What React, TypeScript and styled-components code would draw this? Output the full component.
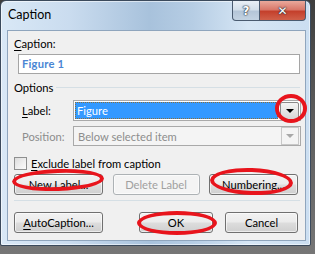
import React from 'react';
import styled, { createGlobalStyle, css } from 'styled-components';

const GlobalStyle = createGlobalStyle`
  html, body {
    margin: 0;
    padding: 0;
    width: 315px;
    height: 254px;
    overflow: hidden;
    background: linear-gradient(180deg, #3e3e3e 0%, #5c5c5c 45%, #767676 100%);
  }
  body {
    font-family: Lato, "Noto Sans", sans-serif;
    font-size: 11.2px;
  }
`;

const Window = styled.div`
  width: 309px;
  height: 244px;
  display: flex;
  flex-direction: column;
  border: 1px solid #3b4a5c;
  border-radius: 6px 6px 2px 2px;
  background: linear-gradient(
    90deg,
    #d9e8f6 0%,
    #cadcef 22%,
    #a8c2dc 48%,
    #b6cde4 62%,
    #d6e6f5 80%,
    #cbdef1 100%
  );
  box-shadow: inset 0 0 0 1px rgba(255, 255, 255, 0.55);
`;

const TitleBar = styled.div`
  height: 29px;
  display: flex;
  align-items: flex-start;
  padding-right: 4px;
`;

const Title = styled.div`
  flex: 1;
  padding: 6px 0 0 7px;
  font-size: 12.5px;
  line-height: 16px;
  color: #000;
`;

const CaptionButton = styled.div<{ $close?: boolean }>`
  height: 19px;
  display: flex;
  align-items: center;
  justify-content: center;
  border: 1px solid #4a5b70;
  border-top: none;
  font-family: "DejaVu Sans", sans-serif;
  font-weight: bold;
  color: #fff;
  text-shadow: 0 0 1px #2a3340, 0 0 1px #2a3340, 0 0 2px #2a3340;
  ${({ $close }) =>
    $close
      ? css`
          width: 45px;
          border-left: none;
          border-radius: 0 0 4px 0;
          font-size: 12px;
          background: linear-gradient(180deg, #e9a99c 0%, #d9786a 45%, #c4402c 55%, #d0604a 100%);
        `
      : css`
          width: 26px;
          border-radius: 0 0 0 4px;
          font-size: 12px;
          background: linear-gradient(180deg, #e8eff6 0%, #d3dfea 45%, #b5c6d8 55%, #c3d3e2 100%);
        `}
`;

const Client = styled.div`
  flex: 1;
  margin: 0 4px 4px 6px;
  border: 1px solid #8fa5bd;
  background: #f0f0f0;
  padding: 5px 5px 0 6px;
  display: flex;
  flex-direction: column;
  color: #000;
`;

const FieldLabel = styled.div`
  line-height: 16px;
  height: 16px;
`;

const Key = styled.span`
  text-decoration: underline;
  text-underline-offset: 2px;
`;

const TextInput = styled.div`
  margin: 2px 0 0 4px;
  height: 18px;
  border: 1px solid #a5a5a5;
  background: #fff;
  padding-left: 3px;
  line-height: 18px;
  color: #4a86d4;
  font-weight: bold;
  letter-spacing: 0.2px;
`;

const GroupHeader = styled.div`
  margin-top: 5px;
  height: 16px;
  display: flex;
  align-items: center;
  gap: 3px;
  &::after {
    content: '';
    flex: 1;
    height: 1px;
    background: #d5dfe5;
  }
`;

const FieldRow = styled.div<{ $top: number }>`
  margin-top: ${({ $top }) => $top}px;
  padding-left: 8px;
  display: flex;
  align-items: center;
`;

const RowLabel = styled.div<{ $disabled?: boolean }>`
  width: 51px;
  color: ${({ $disabled }) => ($disabled ? '#8d8d8d' : '#000')};
`;

const Combo = styled.div<{ $disabled?: boolean }>`
  flex: 1;
  height: ${({ $disabled }) => ($disabled ? 18 : 19)}px;
  border: 1px solid #a9a9a9;
  background: ${({ $disabled }) => ($disabled ? '#f4f4f4' : '#fff')};
  display: flex;
  align-items: center;
  padding: 0 1px 0 1px;
  margin-right: -1px;
  color: ${({ $disabled }) => ($disabled ? '#8d8d8d' : '#000')};
`;

const Selected = styled.div`
  flex: 1;
  height: 17px;
  background: #3399ff;
  outline: 1px dotted #8a6f3a;
  outline-offset: -1px;
  color: #fff;
  line-height: 17px;
  padding-left: 2px;
`;

const ComboValue = styled.div`
  flex: 1;
  padding-left: 3px;
  line-height: 17px;
`;

const ArrowBox = styled.div<{ $disabled?: boolean }>`
  position: relative;
  width: ${({ $disabled }) => ($disabled ? 16 : 17)}px;
  height: 16px;
  margin-left: 2px;
  display: flex;
  align-items: center;
  justify-content: center;
  border: 1px solid ${({ $disabled }) => ($disabled ? '#c8c8c8' : '#8a8a8a')};
  border-radius: ${({ $disabled }) => ($disabled ? 0 : 2)}px;
  background: ${({ $disabled }) =>
    $disabled ? '#f4f4f4' : 'linear-gradient(180deg, #f4f4f4 0%, #e6e6e6 50%, #d6d6d6 100%)'};
  &::before {
    content: '';
    border-left: 4px solid transparent;
    border-right: 4px solid transparent;
    border-top: 4px solid ${({ $disabled }) => ($disabled ? '#a8a8a8' : '#000')};
  }
`;

const CheckRow = styled.div`
  margin-top: 11px;
  height: 13px;
  display: flex;
  align-items: center;
  gap: 4px;
`;

const CheckBox = styled.div`
  width: 11px;
  height: 11px;
  border: 1px solid #8e8f8f;
  background: linear-gradient(135deg, #dcdcdc 0%, #f0f0f0 60%, #fbfbfb 100%);
`;

const ButtonRow = styled.div<{ $top: number }>`
  margin-top: ${({ $top }) => $top}px;
  margin-right: 2px;
  display: flex;
  align-items: center;
  justify-content: space-between;
`;

const ButtonGroup = styled.div`
  display: flex;
  gap: 12px;
`;

const Button = styled.div<{ $w: number; $disabled?: boolean }>`
  position: relative;
  width: ${({ $w }) => $w}px;
  height: 19px;
  box-sizing: content-box;
  border: 1px solid ${({ $disabled }) => ($disabled ? '#adb2b5' : '#707070')};
  border-radius: 3px;
  display: flex;
  align-items: center;
  justify-content: center;
  color: ${({ $disabled }) => ($disabled ? '#a0a0a0' : '#000')};
  background: ${({ $disabled }) =>
    $disabled
      ? '#f4f4f4'
      : 'linear-gradient(180deg, #f2f2f2 0%, #ebebeb 48%, #dddddd 52%, #cfcfcf 100%)'};
  box-shadow: inset 0 0 0 1px rgba(255, 255, 255, 0.6);
`;

const Separator = styled.div`
  margin-top: 5px;
  height: 1px;
  background: #d5dfe5;
`;

const Ring = styled.span<{ $t: number; $r: number; $b: number; $l: number; $rot?: number }>`
  position: absolute;
  top: ${({ $t }) => $t}px;
  right: ${({ $r }) => $r}px;
  bottom: ${({ $b }) => $b}px;
  left: ${({ $l }) => $l}px;
  border: 4px solid #e8141c;
  border-radius: 50%;
  transform: rotate(${({ $rot }) => $rot ?? 0}deg);
  pointer-events: none;
`;

export default function App() {
  return (
    <>
      <GlobalStyle />
      <Window>
        <TitleBar>
          <Title>Caption</Title>
          <CaptionButton>?</CaptionButton>
          <CaptionButton $close>✕</CaptionButton>
        </TitleBar>

        <Client>
          <FieldLabel>
            <Key>C</Key>aption:
          </FieldLabel>
          <TextInput>Figure 1</TextInput>

          <GroupHeader>Options</GroupHeader>

          <FieldRow $top={5}>
            <RowLabel>
              <Key>L</Key>abel:
            </RowLabel>
            <Combo>
              <Selected>Figure</Selected>
              <ArrowBox>
                <Ring $t={-9} $r={-9} $b={-4} $l={-6} />
              </ArrowBox>
            </Combo>
          </FieldRow>

          <FieldRow $top={5}>
            <RowLabel $disabled>Position:</RowLabel>
            <Combo $disabled>
              <ComboValue>Below selected item</ComboValue>
              <ArrowBox $disabled />
            </Combo>
          </FieldRow>

          <CheckRow>
            <CheckBox />
            <span>
              <Key>E</Key>xclude label from caption
            </span>
          </CheckRow>

          <ButtonRow $top={4}>
            <Button $w={87}>
              New Label...
              <Ring $t={-6} $r={-2} $b={3} $l={-3} $rot={-2} />
            </Button>
            <Button $w={85} $disabled>
              Delete Label
            </Button>
            <Button $w={87}>
              <span>
                N<Key>u</Key>mbering...
              </span>
              <Ring $t={-7} $r={4} $b={-1} $l={0} $rot={2} />
            </Button>
          </ButtonRow>

          <Separator />

          <ButtonRow $top={11}>
            <Button $w={87}>
              <span>
                <Key>A</Key>utoCaption...
              </span>
            </Button>
            <ButtonGroup>
              <Button $w={72}>
                OK
                <Ring $t={-2} $r={-5} $b={-3} $l={-3} />
              </Button>
              <Button $w={71}>Cancel</Button>
            </ButtonGroup>
          </ButtonRow>
        </Client>
      </Window>
    </>
  );
}
